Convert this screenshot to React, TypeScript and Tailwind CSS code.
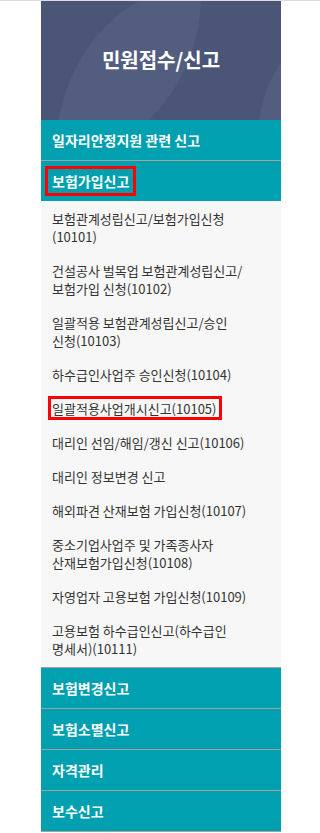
import { Fragment } from "react";
import type { ReactNode } from "react";

type SubItem = {
  lines: string[];
  marked?: boolean;
};

const topMenus = ["일자리안정지원 관련 신고"];

// line breaks follow the original page's wrapping
const subItems: SubItem[] = [
  { lines: ["보험관계성립신고/보험가입신청", "(10101)"] },
  { lines: ["건설공사 벌목업 보험관계성립신고/", "보험가입 신청(10102)"] },
  { lines: ["일괄적용 보험관계성립신고/승인", "신청(10103)"] },
  { lines: ["하수급인사업주 승인신청(10104)"] },
  { lines: ["일괄적용사업개시신고(10105)"], marked: true },
  { lines: ["대리인 선임/해임/갱신 신고(10106)"] },
  { lines: ["대리인 정보변경 신고"] },
  { lines: ["해외파견 산재보험 가입신청(10107)"] },
  { lines: ["중소기업사업주 및 가족종사자", "산재보험가입신청(10108)"] },
  { lines: ["자영업자 고용보험 가입신청(10109)"] },
  { lines: ["고용보험 하수급인신고(하수급인", "명세서)(10111)"] },
];

const bottomMenus = ["보험변경신고", "보험소멸신고", "자격관리", "보수신고"];

const FONT = "font-['Noto_Sans_CJK_KR','Noto_Sans',sans-serif]";

export default function App() {
  return (
    <div className={`min-h-screen border-t border-[#dcdcdc] bg-white ${FONT}`}>
      <nav className="ml-[41px] w-[240px]">
        <Header />

        <ul>
          {topMenus.map((m) => (
            <MenuRow key={m}>{m}</MenuRow>
          ))}

          <li className="bg-[#00a0b1]">
            <div className="flex h-[40px] items-center px-[11px] text-[14px] font-bold text-white">
              <Marked className="-inset-x-[7px] -top-[5px] -bottom-[4px]">
                보험가입신고
              </Marked>
            </div>
            <ul className="border-b border-[#a3a3a3] bg-[#f7f7f7] pt-px pb-px">
              {subItems.map((item) => {
                const text = item.lines.map((line, i) => (
                  <Fragment key={line}>
                    {i > 0 && <br />}
                    {line}
                  </Fragment>
                ));
                return (
                  <li
                    key={item.lines[0]}
                    className="whitespace-nowrap px-[11px] py-2 text-[13px] leading-[18px] text-[#333333]"
                  >
                    {item.marked ? (
                      <Marked className="-left-[4px] -right-[6px] -top-[3px] -bottom-[2px]">
                        {text}
                      </Marked>
                    ) : (
                      text
                    )}
                  </li>
                );
              })}
            </ul>
          </li>

          {bottomMenus.map((m) => (
            <MenuRow key={m}>{m}</MenuRow>
          ))}
        </ul>
      </nav>
    </div>
  );
}

/* ---------- Helpers ---------- */

function Header() {
  return (
    <div className="relative flex h-[119px] items-center justify-center overflow-hidden bg-[#4a5578]">
      <svg
        className="absolute inset-0 h-full w-full"
        viewBox="0 0 240 119"
        preserveAspectRatio="none"
        aria-hidden
      >
        <path
          d="M18,119 C25,70 55,25 97,0 L160,0 C158,50 135,95 107,119 Z"
          fill="#535d80"
        />
        <path d="M218,119 C222,95 230,75 240,62 L240,119 Z" fill="#535d80" />
      </svg>
      <h2 className="relative -mt-[1px] text-[20px] font-bold leading-none text-white">
        민원접수/신고
      </h2>
    </div>
  );
}

function MenuRow({ children }: { children: ReactNode }) {
  return (
    <li className="flex h-[41px] items-center border-b border-[#a3a3a3] bg-[#00a0b1] px-[11px] text-[14px] font-bold text-white">
      {children}
    </li>
  );
}

function Marked({
  children,
  className = "",
}: {
  children: ReactNode;
  className?: string;
}) {
  return (
    <span className="relative">
      {children}
      <span
        className={`pointer-events-none absolute border-[3px] border-[#ff0000] ${className}`}
      />
    </span>
  );
}
